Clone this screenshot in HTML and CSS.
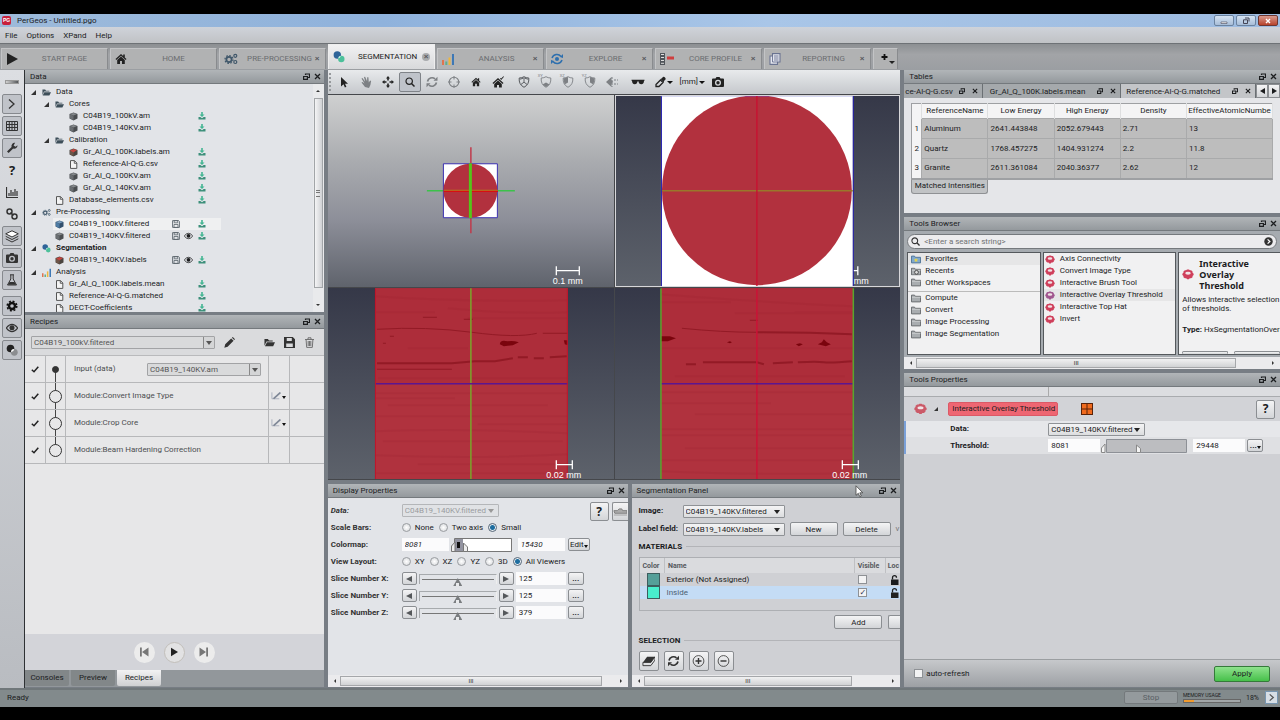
FILE: index.html
```html
<!DOCTYPE html>
<html lang="en">
<head>
<meta charset="utf-8">
<title>PerGeos - Untitled.pgo</title>
<link rel="stylesheet" href="styles.css">
</head>
<body>
<svg class="defs" aria-hidden="true">
  <symbol id="home" viewBox="0 0 12 12"><path d="M6 1 0.5 6l.8.9L6 2.7l4.7 4.2.8-.9L9.800 4.400V1.500H8.200V3zM6 3.600 2.200 7v4H5V8h2v3h2.800V7z"/></symbol>
  <symbol id="home2" viewBox="0 0 12 12"><path d="M6 2 0.500 7l.8.9L6 3.700l4.700 4.200.8-.9zM6 4.600 2.200 8v3.500H5V9h2v2.500h2.800V8zM8 2.500 9.200 4 12 .8 11.400.2 9.200 2.500 8.600 1.900z"/></symbol>
  <symbol id="gears" viewBox="0 0 14 12"><g fill="none" stroke="#40576a"><circle cx="5" cy="6.500" r="2.600" stroke-width="1.700"/><circle cx="5" cy="6.500" r="4" stroke-width="1.200" stroke-dasharray="1.600 1.500"/><circle cx="11.300" cy="2.800" r="1.500" stroke-width="1.200"/><circle cx="11.300" cy="9" r="1.500" stroke-width="1.200"/></g></symbol>
  <symbol id="blobs" viewBox="0 0 12 12"><circle cx="4.300" cy="4" r="3.700" fill="#2f6499"/><circle cx="8.300" cy="8" r="3.200" fill="#4cc09a"/><path d="M5.200 7.500a3.200 3.200 0 0 1 2.700-2.700 3.700 3.700 0 0 1-2.700 2.700z" fill="#e9f5f5"/></symbol>
  <symbol id="bars" viewBox="0 0 12 12"><path d="M0 7h2v5H0z" fill="#e0744e"/><path d="M3.300 8.500h2V12h-2z" fill="#5db08c"/><path d="M6.500 4.500h2V12h-2z" fill="#f0b73a"/><path d="M10 1h2v11h-2z" fill="#3e78b5"/></symbol>
  <symbol id="explore" viewBox="0 0 12 12"><g fill="none" stroke="#2d6fae" stroke-width="1.500"><path d="M1 5a5.200 5.200 0 0 1 9-1.500M11 7a5.200 5.200 0 0 1-9 1.500"/></g><circle cx="6" cy="6" r="2" fill="#2d6fae"/><path d="m9 4 3 1V1zM3 8 0 7v4z" fill="#2d6fae"/></symbol>
  <symbol id="core" viewBox="0 0 14 12"><path d="M0 0h5v12H0z" fill="#50555a"/><path d="M1 1.500h3M1 4.500h3M1 7.500h3M1 10.300h3" stroke="#ddd"/><path d="M7 3.500h7v3H7z" fill="#cf3f3f"/></symbol>
  <symbol id="report" viewBox="0 0 12 12"><path d="M3.500.6h7.500v8.400H8.500v2.400H1V3h2.500z" fill="#e4e6ee" stroke="#6a7391" stroke-width="1.100"/><path d="M5 3h4.500M5 5h4.500M5 7h4.500M3.500 3v6h5" stroke="#6a7391" stroke-width=".9" fill="none"/></symbol>
  <symbol id="play" viewBox="0 0 12 12"><path d="M1 0v12l11-6z"/></symbol>
  <symbol id="folder" viewBox="0 0 10 8"><path d="M.5 7V.8h3l1 1.200h3.700V3H2.200z" fill="#3d4e59"/><path d="M2.600 3.600H10L8.200 7.300H.8z" fill="#3d4e59"/></symbol>
  <symbol id="open" viewBox="0 0 12 9"><path d="M.5 8V.8h3.700l1.300 1.400h4V3.300H2.700z"/><path d="M3.200 4.200H12L10 8.500H1z"/></symbol>
  <symbol id="cube" viewBox="0 0 9 9"><path d="M4.500.5 8.500 2v4.600l-4 2-4-2V2z" fill="#4a4d50"/><path d="m1 2.300 3.500 1.500v4.300L1 6.400z" fill="#6a6e72"/><path d="M4.500 1 8 2.100 4.500 3.500 1 2.100z" fill="#85898c"/></symbol>
  <symbol id="cubeblue" viewBox="0 0 9 9"><path d="M4.500.5 8.500 2v4.600l-4 2-4-2V2z" fill="#33506c"/><path d="m1 2.300 3.500 1.500v4.300L1 6.400z" fill="#4d7ba3"/><path d="M4.500 1 8 2.100 4.500 3.500 1 2.100z" fill="#7ba0c0"/></symbol>
  <symbol id="cubered" viewBox="0 0 9 9"><path d="M4.500.5 8.500 2v4.600l-4 2-4-2V2z" fill="#4a4540"/><path d="m1 2.300 3.500 1.500v4.300L1 6.400z" fill="#6c5548"/><path d="M4.500 1 8 2.100 4.500 4.500 1 2.500z" fill="#c4453f"/></symbol>
  <symbol id="doc" viewBox="0 0 8 9"><path d="M1 .6h4L7.300 3v5.400H1z" fill="#f4f4f4" stroke="#555" stroke-width="1"/><path d="M4.800.6v2.700h2.500" fill="none" stroke="#555" stroke-width=".9"/></symbol>
  <symbol id="down" viewBox="0 0 8 8"><path d="M3.200 0h1.600v2.500h1.700L4 5 1.500 2.500h1.700z" fill="#43b592"/><path d="M.5 5h1.800L4 6.300 5.700 5h1.800v2.500h-7z" fill="#3c8f7a"/></symbol>
  <symbol id="disk" viewBox="0 0 8 8"><path d="M.6.600h6l.8.8v6H.6z" fill="none" stroke="#5a646c" stroke-width=".9"/><path d="M2.200.6h3.500v2.200H2.200zM2 4.500h4v3H2z" fill="none" stroke="#5a646c" stroke-width=".8"/></symbol>
  <symbol id="save" viewBox="0 0 10 10"><path d="M0 0h8l2 2v8H0zm2.500 1v2.700h4.600V1zM2 5.800V9h6V5.800z" fill-rule="evenodd"/></symbol>
  <symbol id="eye" viewBox="0 0 10 8"><path d="M.3 4Q2.500 1 5 1t4.700 3Q7.500 7 5 7T.3 4z" fill="none" stroke="currentColor" stroke-width=".9"/><circle cx="5" cy="3.800" r="2.100"/></symbol>
  <symbol id="float" viewBox="0 0 7 7"><path d="M2.500 2V1h4v3.500H5" fill="none" stroke="currentColor" stroke-width="1.200"/><path d="M.6 3.500h3.800v2.900H.6z" fill="none" stroke="currentColor" stroke-width="1.200"/></symbol>
  <symbol id="close" viewBox="0 0 7 7"><path d="m1 1 5 5M6 1 1 6" stroke="currentColor" stroke-width="1.300"/></symbol>
  <symbol id="pen" viewBox="0 0 10 10"><path d="m.3 9.700.8-3L6.500 1.300l2.200 2.200-5.400 5.400zM7.200.7 8 0l2 2-.7.8z"/></symbol>
  <symbol id="trash" viewBox="0 0 10 11"><path d="M.5 2.500h9M3.500 2.300V.8h3v1.500M1.600 2.800l.6 7.600h5.600l.6-7.600M3.700 4v5M5 4v5M6.300 4v5" fill="none" stroke="#666" stroke-width=".9"/></symbol>
  <symbol id="check" viewBox="0 0 8 7"><path d="m.8 3.700 2.200 2L7.300.8" fill="none" stroke="#222" stroke-width="1.500"/></symbol>
  <symbol id="pencil" viewBox="0 0 12 10"><path d="M1 1v7h8" fill="none" stroke="#98a1b0" stroke-width=".8"/><path d="m2 7.500 7.500-7 1.500 1.200L3.500 8.500z" fill="#7e8796"/></symbol>
  <symbol id="magnify" viewBox="0 0 10 10"><circle cx="4.200" cy="4.200" r="3.200" fill="none" stroke="currentColor" stroke-width="1.200"/><path d="m6.500 6.500 3 3" stroke="currentColor" stroke-width="1.500"/></symbol>
  <symbol id="camera" viewBox="0 0 12 11"><path d="M1 2h2.500L4.500.6h3L8.500 2H11q1 0 1 1v6.500q0 1-1 1H1q-1 0-1-1V3q0-1 1-1zm5 1.200a3 3 0 1 0 0 6 3 3 0 0 0 0-6zm0 1.300a1.700 1.700 0 1 1 0 3.400 1.700 1.700 0 0 1 0-3.400z" fill-rule="evenodd"/></symbol>
  <symbol id="shield" viewBox="0 0 12 12"><path d="M1.200 2Q4 2 6 .7 8 2 10.800 2 11.400 8.500 6 11.300.6 8.500 1.200 2z" fill="none" stroke="currentColor"/><path d="M6 3v3.200L2.800 8.500M6 6.200l3.200 2.300M2 3.200 6 2l4 1.200" fill="none" stroke="currentColor" stroke-width=".9"/></symbol>
  <symbol id="shieldbase" viewBox="0 0 12 12"><path d="M1.200 2Q4 2 6 .7 8 2 10.800 2 11.400 8.500 6 11.300.6 8.500 1.200 2z" fill="none" stroke="currentColor" stroke-width=".9"/></symbol>
  <symbol id="swirl" viewBox="0 0 12 12"><path d="M1.500 5.500a4.600 4.600 0 0 1 7.500-2.600M10.500 6.500A4.600 4.600 0 0 1 3 9.100" fill="none" stroke="currentColor" stroke-width="1.700"/><path d="M7.500 4.700h4V.8zM4.500 7.300h-4v3.900z"/></symbol>
  <symbol id="ring" viewBox="0 0 10 9"><path d="m1.200 2 1.200-1h1L4.200.4h1.600l.8.600h1L8.800 2v1l.9.800V5l-.9.700v1L7.600 7.600H6.400l-.6.800H4.200l-.6-.8H2.400L1.200 6.700v-1L.3 5V3.800L1.200 3z" fill="currentColor"/><ellipse cx="5" cy="3.500" rx="2.300" ry="1.200" fill="#f1e3e6"/></symbol>
  <symbol id="dir" viewBox="0 0 10 8"><path d="M.5.600h3l.8 1.200h5.200v5.600h-9z" fill="#a9adb0" stroke="#64686b" stroke-width=".9"/><path d="M1 2.800h8.500" stroke="#d5d8da" stroke-width=".7"/></symbol>
  <symbol id="lock" viewBox="0 0 9 10"><path d="M1 4.500h7.500V10H1z"/><path d="M2.500 4.500V2.700a2 2 0 0 1 4 0" fill="none" stroke="currentColor" stroke-width="1.300"/></symbol>
</svg>

<div class="app">
  <header class="titlebar">
    <span class="logo">PG</span>
    <h1>PerGeos - Untitled.pgo</h1>
    <div class="winbtns">
      <button aria-label="Minimize"><svg viewBox="0 0 10 8"><path d="M2 5h6v1.500H2z" fill="#fff" stroke="#445" stroke-width=".6"/></svg></button>
      <button aria-label="Restore"><svg viewBox="0 0 10 8"><path d="M4 1h4v3.500M2.500 2.800h4v3.700h-4z" fill="none" stroke="#445" stroke-width="1"/></svg></button>
      <button class="winclose" aria-label="Close window"><svg viewBox="0 0 10 8"><path d="m3 2 4 4M7 2 3 6" stroke="#fff" stroke-width="1.400"/></svg></button>
    </div>
  </header>
  <nav class="menubar"><button>File</button><button>Options</button><button>XPand</button><button>Help</button></nav>

  <nav class="tabs">
    <button class="tab"><svg class="i12"><use href="#play"/></svg><span>START PAGE</span></button>
    <button class="tab"><svg class="i12"><use href="#home"/></svg><span>HOME</span></button>
    <button class="tab"><svg class="i14"><use href="#gears"/></svg><span>PRE-PROCESSING</span><b>×</b></button>
    <button class="tab active"><svg class="i12"><use href="#blobs"/></svg><span>SEGMENTATION</span><b>×</b></button>
    <button class="tab"><svg class="i12"><use href="#bars"/></svg><span>ANALYSIS</span><b>×</b></button>
    <button class="tab"><svg class="i12"><use href="#explore"/></svg><span>EXPLORE</span><b>×</b></button>
    <button class="tab"><svg class="i14"><use href="#core"/></svg><span>CORE PROFILE</span><b>×</b></button>
    <button class="tab"><svg class="i12"><use href="#report"/></svg><span>REPORTING</span><b>×</b></button>
    <button class="tab plus" aria-label="Add tab"><svg viewBox="0 0 14 12"><path d="M3.500 0v6M.5 3h6" stroke="#111" stroke-width="1.800"/><path d="M8 7h6l-3 3z"/></svg></button>
  </nav>

  <div class="work">
    <aside class="rail">
      <span class="grip"></span>
      <button class="on" aria-label="Console"><svg viewBox="0 0 12 12"><path d="m3 1.500 5 4.500-5 4.500" fill="none" stroke="#333" stroke-width="1.300"/></svg></button>
      <button class="on" aria-label="Tables"><svg viewBox="0 0 12 12"><path d="M.5 1.500h11v9H.5zM.5 4.500h11M.5 7.500h11M3.300 1.500v9M6 1.500v9M8.700 1.500v9" fill="none" stroke="#333"/></svg></button>
      <button class="on" aria-label="Tools"><svg viewBox="0 0 12 12"><path d="M11.500 3.200 9.500 4.800 7.600 3.500l1.500-2.700A3.200 3.200 0 0 0 5.600 5L1 9.500 2.600 11l4.600-4.500a3.200 3.200 0 0 0 4.300-3.300z" fill="#333"/></svg></button>
      <button aria-label="Help"><span class="q">?</span></button>
      <button aria-label="Histogram"><svg viewBox="0 0 12 12"><path d="M.5 1v10.500H12M3 10V7M5 10V4M7 10V6M9 10V3M11 10V5" fill="none" stroke="#333" stroke-width="1.200"/></svg></button>
      <button aria-label="Link"><svg viewBox="0 0 12 12"><circle cx="3.500" cy="3.500" r="2.500" fill="none" stroke="#333" stroke-width="1.500"/><circle cx="8.500" cy="8.500" r="2.500" fill="none" stroke="#333" stroke-width="1.500"/><path d="m4.500 4.500 3 3" stroke="#333" stroke-width="1.500"/></svg></button>
      <button class="on" aria-label="Layers"><svg class="big" viewBox="0 0 14 13"><path d="m7 .8 6.300 3L7 7 .7 3.800z" fill="#fff" stroke="#333"/><path d="M.7 6.300 7 9.500l6.300-3.200M.7 8.800 7 12l6.300-3.200" fill="none" stroke="#333"/></svg></button>
      <button class="on" aria-label="Snapshot"><svg><use href="#camera"/></svg></button>
      <button class="on" aria-label="Lab"><svg viewBox="0 0 12 12"><path d="M4 .8h4M4.800 1v4L1.500 11h9L7.200 5V1" fill="none" stroke="#333"/><path d="M3.500 8h5l1.500 2.800H2z"/></svg></button>
      <button class="on apart" aria-label="Settings"><svg viewBox="0 0 12 12"><circle cx="6" cy="6" r="3" fill="none" stroke="#111" stroke-width="2.400"/><circle cx="6" cy="6" r="4.800" fill="none" stroke="#111" stroke-width="1.500" stroke-dasharray="2 1.770"/></svg></button>
      <button class="on" aria-label="Visibility"><svg><use href="#eye"/></svg></button>
      <button class="on" aria-label="Blend"><svg viewBox="0 0 12 12"><circle cx="4.500" cy="4.500" r="3.800" fill="#222"/><circle cx="8.300" cy="8.300" r="3.400" fill="#8b8d90"/><path d="M5 8.200A3.400 3.400 0 0 1 8.300 5 3.800 3.800 0 0 1 5 8.200z" fill="#fff"/></svg></button>
    </aside>

    <main class="columns">
      <div class="col left">
        <section class="panel datapanel">
          <header class="phead"><h2>Data</h2><button aria-label="Float"><svg><use href="#float"/></svg></button><button aria-label="Close"><svg><use href="#close"/></svg></button></header>
          <div class="treebox">
            <ul class="tree">
              <li class="l1"><span class="n"><i></i><svg><use href="#folder"/></svg>Data</span></li>
              <li class="l2"><span class="n"><i></i><svg><use href="#folder"/></svg>Cores</span></li>
              <li class="l3"><span class="n"><svg><use href="#cube"/></svg>C04B19_100kV.am</span><svg class="c3"><use href="#down"/></svg></li>
              <li class="l3"><span class="n"><svg><use href="#cube"/></svg>C04B19_140KV.am</span><svg class="c3"><use href="#down"/></svg></li>
              <li class="l2"><span class="n"><i></i><svg><use href="#folder"/></svg>Calibration</span></li>
              <li class="l3"><span class="n"><svg><use href="#cubered"/></svg>Gr_Al_Q_100K.labels.am</span><svg class="c3"><use href="#down"/></svg></li>
              <li class="l3"><span class="n"><svg><use href="#doc"/></svg>Reference-Al-Q-G.csv</span><svg class="c3"><use href="#down"/></svg></li>
              <li class="l3"><span class="n"><svg><use href="#cube"/></svg>Gr_Al_Q_100KV.am</span><svg class="c3"><use href="#down"/></svg></li>
              <li class="l3"><span class="n"><svg><use href="#cube"/></svg>Gr_Al_Q_140KV.am</span><svg class="c3"><use href="#down"/></svg></li>
              <li class="l2x"><span class="n"><svg><use href="#doc"/></svg>Database_elements.csv</span><svg class="c3"><use href="#down"/></svg></li>
              <li class="l1"><span class="n"><i></i><svg><use href="#gears"/></svg>Pre-Processing</span></li>
              <li class="l2x sel"><span class="n"><svg><use href="#cubeblue"/></svg>C04B19_100kV.filtered</span><svg class="c1"><use href="#disk"/></svg><svg class="c3"><use href="#down"/></svg></li>
              <li class="l2x"><span class="n"><svg><use href="#cube"/></svg>C04B19_140KV.filtered</span><svg class="c1"><use href="#disk"/></svg><svg class="c2"><use href="#eye"/></svg><svg class="c3"><use href="#down"/></svg></li>
              <li class="l1"><span class="n"><i></i><svg><use href="#blobs"/></svg><b>Segmentation</b></span></li>
              <li class="l2x"><span class="n"><svg><use href="#cubered"/></svg>C04B19_140KV.labels</span><svg class="c1"><use href="#disk"/></svg><svg class="c2"><use href="#eye"/></svg><svg class="c3"><use href="#down"/></svg></li>
              <li class="l1"><span class="n"><i></i><svg><use href="#bars"/></svg>Analysis</span></li>
              <li class="l2x"><span class="n"><svg><use href="#doc"/></svg>Gr_Al_Q_100K.labels.mean</span><svg class="c3"><use href="#down"/></svg></li>
              <li class="l2x"><span class="n"><svg><use href="#doc"/></svg>Reference-Al-Q-G.matched</span><svg class="c3"><use href="#down"/></svg></li>
              <li class="l2x"><span class="n"><svg><use href="#doc"/></svg>DECT-Coefficients</span><svg class="c3"><use href="#down"/></svg></li>
            </ul>
            <div class="vscroll"><i class="up"></i><span></span><i class="dn"></i></div>
          </div>
        </section>

        <section class="panel recipes">
          <header class="phead"><h2>Recipes</h2><button aria-label="Float"><svg><use href="#float"/></svg></button><button aria-label="Close"><svg><use href="#close"/></svg></button></header>
          <div class="rbar">
            <span class="sel-wrap split wide"><select aria-label="Recipe"><option>C04B19_100kV.filtered</option></select></span>
            <button aria-label="Edit"><svg><use href="#pen"/></svg></button>
            <span class="grow"></span>
            <button aria-label="Open"><svg><use href="#open"/></svg></button>
            <button aria-label="Save"><svg><use href="#save"/></svg></button>
            <button aria-label="Delete recipe"><svg><use href="#trash"/></svg></button>
          </div>
          <div class="steps">
            <div class="step first"><svg><use href="#check"/></svg><span class="node dot"></span><label for="inp">Input (data)</label><span class="sel-wrap split"><select id="inp"><option>C04B19_140KV.am</option></select></span><span class="cell"></span><span class="cell"></span></div>
            <div class="step"><svg><use href="#check"/></svg><span class="node"></span><p>Module:Convert Image Type</p><span class="cell"><svg><use href="#pencil"/></svg><i></i></span><span class="cell"></span></div>
            <div class="step"><svg><use href="#check"/></svg><span class="node"></span><p>Module:Crop Core</p><span class="cell"><svg><use href="#pencil"/></svg><i></i></span><span class="cell"></span></div>
            <div class="step last"><svg><use href="#check"/></svg><span class="node"></span><p>Module:Beam Hardening Correction</p><span class="cell"></span><span class="cell"></span></div>
          </div>
          <div class="transport">
            <button aria-label="First"><svg viewBox="0 0 10 10"><path d="M1 .5h1.800v9H1zM9.500.5v9L3 5z" fill="#777"/></svg></button>
            <button class="mid" aria-label="Play"><svg viewBox="0 0 10 10"><path d="M2 .8v8.400L9 5z"/></svg></button>
            <button aria-label="Last"><svg viewBox="0 0 10 10"><path d="M7.200.5H9v9H7.200zM.5.500v9L7 5z" fill="#777"/></svg></button>
          </div>
          <nav class="btabs"><button>Consoles</button><button>Preview</button><button class="active">Recipes</button></nav>
        </section>
      </div>

      <div class="col center">
        <div class="toolbar">
          <span class="dots"></span>
          <button aria-label="Select"><svg viewBox="0 0 12 12"><path d="M3 1v9.500L5.500 8.200l1.400 3.200 1.500-.7L7 7.700h3z"/></svg></button>
          <button class="dim" aria-label="Pan"><svg viewBox="0 0 12 12"><path d="M5 11 1.500 6.500l1-.6L4.500 7.500 1.500 2.600l1-.6 2.700 3.800L4 1l1.100-.3 2 4.600L7.200 1.200l1.200.1.400 5.200 1.300-2 1 .5L10.400 9 9 12z"/></svg></button>
          <button aria-label="Move"><svg viewBox="0 0 12 12"><path d="m6 0 2 2.500H6.800v2H5.200v-2H4zM6 12l2-2.500H6.800v-2H5.200v2H4zM0 6l2.500-2v1.200h2v1.600h-2V8zM12 6 9.500 4v1.200h-2v1.600h2V8z"/></svg></button>
          <button class="on" aria-label="Zoom"><svg viewBox="0 0 10 10"><use href="#magnify"/></svg></button>
          <button class="dim" aria-label="Rotate"><svg><use href="#swirl"/></svg></button>
          <button class="dim" aria-label="Target"><svg viewBox="0 0 12 12"><circle cx="6" cy="6" r="4.800" fill="none" stroke="currentColor" stroke-width="1.100"/><path d="M6 0v3.500M6 8.500V12M0 6h3.500M8.500 6H12" stroke="currentColor"/></svg></button>
          <button aria-label="Home"><svg class="sm"><use href="#home"/></svg></button>
          <button aria-label="Set home"><svg><use href="#home2"/></svg></button>
          <button class="gap4 mid" aria-label="Isometric"><svg><use href="#shield"/></svg></button>
          <button class="dim" aria-label="XY"><svg viewBox="0 0 12 12"><use href="#shieldbase"/><path d="M2.500 8.500 6 6.500l3.500 2L6 11z"/></svg><sup>XY</sup></button>
          <button class="dim" aria-label="XZ"><svg viewBox="0 0 12 12"><use href="#shieldbase"/><path d="M1.500 2.500 6 1v5.500L2.500 8.500z"/></svg><sup>XZ</sup></button>
          <button class="dim" aria-label="YZ"><svg viewBox="0 0 12 12"><use href="#shieldbase"/><path d="M10.500 2.500 6 1v5.500l3.500 2z"/></svg><sup>YZ</sup></button>
          <button class="dim" aria-label="Perspective"><svg viewBox="0 0 12 12"><path d="M0 6 5.500 1v3l1.500 2-1.500 2v3z"/><path d="M6 1v10M8 4h4M8 8h4" stroke="currentColor" fill="none" stroke-dasharray="2 1"/></svg></button>
          <button class="gap4" aria-label="Stereo"><svg class="wide" viewBox="0 0 14 8"><path d="M.5 1.800h13v1H13q0 3.400-2.700 3.400T7.700 3.500H6.300Q6.300 6.200 3.700 6.200T1 2.800H.5z"/></svg></button>
          <button class="w30" aria-label="Measure"><svg viewBox="0 0 12 12"><path d="M2 8.500 6.500 4 9 6.500 5 10.500H2z" fill="none" stroke="#222" stroke-width="1.300"/><path d="m6.500 3 1-.5 1.500-1.500q1-.5 2 .5t.5 2L10 5v1.500z"/></svg><i></i></button>
          <button class="w30">[mm]<i></i></button>
          <button aria-label="Snapshot"><svg><use href="#camera"/></svg></button>
        </div>

        <div class="viewers">
          <svg class="view light" viewBox="0 0 286 191">
            <path d="M143 52v86" stroke="#c03a4c" stroke-width="1.500"/><path d="M99 95.500h88" stroke="#3cc24a" stroke-width="1.500"/>
            <path d="M115.500 68.500h54v54h-54z" fill="#fff" stroke="#3a2fb0"/>
            <circle cx="142.500" cy="95.500" r="27" fill="#b2313e"/>
            <path d="M116 96h54" stroke="#d80f10" stroke-width="1.500"/><path d="M116 95h54" stroke="#b5791c"/><path d="M142.500 68v55" stroke="#55c41a" stroke-width="3"/>
            <path d="M228.500 171v9M251.500 171v9M228 175.500h23" stroke="#fff" stroke-width="1.300"/><text x="240" y="189">0.1 mm</text>
          </svg>
          <svg class="view picked" viewBox="0 0 286 191">
            <path d="M46 0h192v191H46z" fill="#fff"/>
            <circle cx="142" cy="95" r="95" fill="#b2313e"/>
            <path d="M46.500 0v191M238.500 0v191" stroke="#241fb0"/><path d="M46 .5h192" stroke="#7f86d8"/><path d="M130 .5h24" stroke="#8a1590"/>
            <path d="M47 95.500h191" stroke="#99772b" stroke-width="1.300"/><path d="M142 0v191" stroke="#c90f30" stroke-width="1.300"/>
            <path d="M239 175.500h4M243 171v9" stroke="#fff" stroke-width="1.300"/><text class="start" x="239" y="189">mm</text>
          </svg>
          <svg class="view" viewBox="0 0 286 191">
            <path d="M47 0h193v191H47z" fill="#b0323e"/><path d="M47 0h193v95H47z" fill="#ad2d3a"/>
            <g class="streaks"><path d="M47 8q90 6 193 4M120 20q60 6 120 4M47 24h60M80 60h60M50 90h190M47 105h193M60 117h160M47 128h193M47 143q90-3 193 2M55 153h180M47 167q100 4 193-1M90 176h150M47 185h193M140 30h100M47 110h80M150 136h90"/></g>
            <g class="cracks"><path d="M49 41q50-3 95 3t65 1M215 45h25M49 81h75M95 29h14M136 31h9"/><path class="deep" d="M49 75h75l23-2h20l18-3M190 69h10M206 70h10M222 69l17-1"/><path d="M55 55h3M62 48h4"/></g>
            <path class="void" d="M172 56q0-5 8-3 5-1 11 1l-6 3-9 1zM236 52h4v5l-3-1z"/>
            <path d="M143 0v191" stroke="#7f982c" stroke-width="1.700"/><path d="M47 95.500h193" stroke="#5b1590" stroke-width="1.300"/><path d="M47.500 0v191M239.500 0v191" stroke="#c0152b"/>
            <path d="M228.500 172v9M244.500 172v9M228 176.500h16" stroke="#fff" stroke-width="1.300"/><text x="236" y="190">0.02 mm</text>
          </svg>
          <svg class="view" viewBox="0 0 286 191">
            <path d="M46 0h192v191H46z" fill="#b0323e"/><path d="M46 0h192v95H46z" fill="#ad2d3a"/>
            <g class="streaks"><path d="M46 6q70 6 192 12M46 14h70M120 25h118M180 24h58M46 60h192M60 88h170M46 104h192M80 126h158M46 141h192M46 147h192M70 160h168M46 172h192M46 183q90 4 192 2M46 115h110"/></g>
            <g class="cracks"><path d="M67 40q40 4 75 4M135 32h8"/><path class="deep" d="M142 44q53 0 95 2M71 76h10M88 74h54l7 2M158 75l20-1M183 74q20-1 26 0t28-1"/></g>
            <path class="void" d="M46 48h9l6 2-8 3h-7zM112 54l3-1 2 1-2 1zM181 56l4-1 3 1-4 2zM203 56l4-2 2-3 3 3 4 2-5 2z"/>
            <path d="M142 0v191" stroke="#cb1236" stroke-width="1.500"/><path d="M46 95.500h192" stroke="#5b1590" stroke-width="1.300"/><path d="M46 0v191M238.500 0v191" stroke="#5aa52c" stroke-width="1.500"/>
            <path d="M227.500 172v9M243.500 172v9M227 176.500h16" stroke="#fff" stroke-width="1.300"/><text x="235" y="190">0.02 mm</text>
          </svg>
        </div>

        <div class="bottom">
          <section class="panel display">
            <header class="phead"><h2>Display Properties</h2><button aria-label="Float"><svg><use href="#float"/></svg></button><button aria-label="Close"><svg><use href="#close"/></svg></button></header>
            <form class="props">
              <div class="row"><label class="lab" for="dd"><em>Data:</em></label><span class="sel-wrap off"><select id="dd" disabled><option>C04B19_140KV.filtered</option></select></span></div>
              <div class="row"><span class="lab">Scale Bars:</span><label><input type="radio" name="sb">None</label><label><input type="radio" name="sb">Two axis</label><label><input type="radio" name="sb" checked>Small</label></div>
              <div class="row"><label class="lab" for="cm">Colormap:</label><input id="cm" class="num ital" value="8081"><span class="ramp"><svg viewBox="0 0 61 14"><path d="M3.500.5h57v13h-57z" fill="#fff" stroke="#777"/><path d="M4 1h8v12H4z" fill="#9293a0"/><path d="M6 4h3v6H6z" fill="#111"/><path d="M.5 13.500V8L4 4v9.500zM12.500 13.500V5l4 4v4.500z" fill="#eee" stroke="#777"/></svg></span><input class="num ital" aria-label="Colormap maximum" value="15430"><button type="button" class="btn edit">Edit<i></i></button></div>
              <div class="row"><span class="lab">View Layout:</span><label><input type="radio" name="vl">XY</label><label><input type="radio" name="vl">XZ</label><label><input type="radio" name="vl">YZ</label><label><input type="radio" name="vl">3D</label><label><input type="radio" name="vl" checked>All Viewers</label></div>
              <div class="row"><label class="lab" for="sx">Slice Number X:</label><button type="button" class="btn arr" aria-label="Previous"><i class="lt"></i></button><input class="slide" type="range" aria-label="Slice X"><button type="button" class="btn arr" aria-label="Next"><i class="rt"></i></button><input id="sx" class="num val" value="125"><button type="button" class="btn more">...</button></div>
              <div class="row"><label class="lab" for="sy">Slice Number Y:</label><button type="button" class="btn arr" aria-label="Previous"><i class="lt"></i></button><input class="slide" type="range" aria-label="Slice Y"><button type="button" class="btn arr" aria-label="Next"><i class="rt"></i></button><input id="sy" class="num val" value="125"><button type="button" class="btn more">...</button></div>
              <div class="row"><label class="lab" for="sz">Slice Number Z:</label><button type="button" class="btn arr" aria-label="Previous"><i class="lt"></i></button><input class="slide" type="range" aria-label="Slice Z"><button type="button" class="btn arr" aria-label="Next"><i class="rt"></i></button><input id="sz" class="num val" value="379"><button type="button" class="btn more">...</button></div>
              <div class="corner"><button type="button" class="btn sq">?</button><button type="button" class="btn sq cut" aria-label="Port"><svg viewBox="0 0 16 12"><path d="M1 5h4l2-2h3l1 2h5v3H2z" fill="#aaa" stroke="#777"/><path d="M1 10h15" stroke="#999"/></svg></button></div>
            </form>
            <div class="hscroll"><i class="lt"></i><span class="thumb t1">III</span><i class="rt"></i></div>
          </section>

          <section class="panel seg">
            <header class="phead"><h2>Segmentation Panel</h2><button aria-label="Float"><svg><use href="#float"/></svg></button><button aria-label="Close"><svg><use href="#close"/></svg></button>
              <svg class="cursor" viewBox="0 0 9 13"><path d="M1 .8v9.500l2.300-2 1.500 3.400 1.500-.7-1.500-3.200h3z" fill="#fff" stroke="#444" stroke-width=".8"/></svg></header>
            <div class="segbody">
              <div class="srow"><label for="im">Image:</label><span class="sel-wrap"><select id="im"><option>C04B19_140KV.filtered</option></select></span></div>
              <div class="srow"><label for="lf">Label field:</label><span class="sel-wrap"><select id="lf"><option>C04B19_140KV.labels</option></select></span><button class="btn cmd">New</button><button class="btn cmd">Delete</button><span class="vmark">v</span></div>
              <h3><span>MATERIALS</span></h3>
              <div class="mats"><table>
                <thead><tr><th class="mc">Color</th><th>Name</th><th class="mv">Visible</th><th class="ml">Loc</th></tr></thead>
                <tbody>
                  <tr><td><span class="sw ext"></span></td><td>Exterior (Not Assigned)</td><td class="mid"><input type="checkbox" aria-label="Exterior visible"></td><td><svg><use href="#lock"/></svg></td></tr>
                  <tr class="chosen"><td><span class="sw ins"></span></td><td>Inside</td><td class="mid"><input type="checkbox" aria-label="Inside visible" checked></td><td><svg><use href="#lock"/></svg></td></tr>
                </tbody></table></div>
              <div class="addrow"><button class="btn cmd">Add</button><button class="btn cmd stub" aria-label="Remove"></button></div>
              <h3><span>SELECTION</span></h3>
              <div class="tools">
                <button class="btn" aria-label="Erase"><svg viewBox="0 0 14 12"><path d="M5.500 1.500H14l-4.500 6H1z"/><path d="M1 7.500h8.500l4.500-6V5L9.500 11H1z" fill="none" stroke="#333"/></svg></button>
                <button class="btn" aria-label="Refresh"><svg><use href="#swirl"/></svg></button>
                <button class="btn" aria-label="Add to selection"><svg viewBox="0 0 12 12"><circle cx="6" cy="6" r="5.400" fill="none" stroke="#444" stroke-width=".9"/><path d="M6 3v6M3 6h6" stroke="#333" stroke-width="1.400"/></svg></button>
                <button class="btn" aria-label="Subtract from selection"><svg viewBox="0 0 12 12"><circle cx="6" cy="6" r="5.400" fill="none" stroke="#444" stroke-width=".9"/><path d="M3 6h6" stroke="#333" stroke-width="1.400"/></svg></button>
              </div>
            </div>
            <div class="hscroll"><i class="lt"></i><span class="thumb t2">III</span><i class="rt"></i></div>
          </section>
        </div>
      </div>

      <div class="col right">
        <section class="panel tables">
          <header class="phead"><h2>Tables</h2><button aria-label="Float"><svg><use href="#float"/></svg></button><button aria-label="Close"><svg><use href="#close"/></svg></button></header>
          <nav class="ttabs">
            <span class="tt t-a"><button>ce-Al-Q-G.csv</button><svg><use href="#float"/></svg><svg><use href="#close"/></svg></span>
            <span class="tt t-b"><button>Gr_Al_Q_100K.labels.mean</button><svg><use href="#float"/></svg><svg><use href="#close"/></svg></span>
            <span class="tt t-c"><button>Reference-Al-Q-G.matched</button><svg><use href="#float"/></svg><svg><use href="#close"/></svg></span>
            <button class="btn nav" aria-label="Scroll left"><i class="lt"></i></button><button class="btn nav" aria-label="Scroll right"><i class="rt"></i></button>
          </nav>
          <div class="tbody">
            <table>
              <thead><tr><th class="rn"></th><th>ReferenceName</th><th>Low Energy</th><th>High Energy</th><th>Density</th><th class="ean">EffectiveAtomicNumbe</th></tr></thead>
              <tbody>
                <tr><th>1</th><td>Aluminum</td><td>2641.443848</td><td>2052.679443</td><td>2.71</td><td>13</td></tr>
                <tr><th>2</th><td>Quartz</td><td>1768.457275</td><td>1404.931274</td><td>2.2</td><td>11.8</td></tr>
                <tr><th>3</th><td>Granite</td><td>2611.361084</td><td>2040.36377</td><td>2.62</td><td>12</td></tr>
              </tbody>
            </table>
            <button class="sheet">Matched Intensities</button>
          </div>
        </section>

        <section class="panel browser">
          <header class="phead"><h2>Tools Browser</h2><button aria-label="Float"><svg><use href="#float"/></svg></button><button aria-label="Close"><svg><use href="#close"/></svg></button></header>
          <div class="search"><svg><use href="#magnify"/></svg><input type="text" aria-label="Search" placeholder="&lt;Enter a search string&gt;"><button aria-label="Go"><svg viewBox="0 0 10 10"><circle cx="5" cy="5" r="4.700"/><path d="m4 2.600 2.500 2.400L4 7.400" fill="none" stroke="#fff" stroke-width="1.400"/></svg></button></div>
          <div class="lists">
            <ul class="list">
              <li class="hot"><svg viewBox="0 0 10 8"><path d="M.5.600h3l.8 1.200h5.200v5.600h-9z" fill="#7fa9cf" stroke="#4d7396" stroke-width=".9"/><path d="m5 2.500.7 1.300 1.500.2-1.100 1 .3 1.500L5 5.800l-1.400.7.300-1.500-1.100-1 1.500-.2z" fill="#e6d34a"/></svg>Favorites</li><li><svg viewBox="0 0 10 8"><use href="#dir"/><circle cx="5.500" cy="4.800" r="1.900" fill="#ddd" stroke="#333" stroke-width=".8"/></svg>Recents</li><li class="rule"><svg><use href="#dir"/></svg>Other Workspaces</li>
              <li><svg><use href="#dir"/></svg>Compute</li><li><svg><use href="#dir"/></svg>Convert</li><li><svg><use href="#dir"/></svg>Image Processing</li><li><svg><use href="#dir"/></svg>Image Segmentation</li>
            </ul>
            <ul class="list rings">
              <li><svg><use href="#ring"/></svg>Axis Connectivity</li><li><svg><use href="#ring"/></svg>Convert Image Type</li><li><svg><use href="#ring"/></svg>Interactive Brush Tool</li><li class="hot"><svg class="pu"><use href="#ring"/></svg>Interactive Overlay Threshold</li><li><svg><use href="#ring"/></svg>Interactive Top Hat</li><li><svg><use href="#ring"/></svg>Invert</li>
            </ul>
            <article class="info">
              <div class="ihead"><svg><use href="#ring"/></svg><h3>Interactive Overlay Threshold</h3></div>
              <p>Allows interactive selection of thresholds.</p>
              <p class="type"><b>Type:</b> HxSegmentationOverla</p>
              <div class="ibtns"><button class="btn" aria-label="Create"></button><button class="btn" aria-label="Help"></button></div>
            </article>
          </div>
          <div class="hscroll"><i class="lt"></i><span class="thumb t3">III</span><i class="rt"></i></div>
        </section>

        <section class="panel tprops">
          <header class="phead"><h2>Tools Properties</h2><button aria-label="Float"><svg><use href="#float"/></svg></button><button aria-label="Close"><svg><use href="#close"/></svg></button></header>
          <div class="sub"></div>
          <div class="modrow"><svg class="ringbig"><use href="#ring"/></svg><i class="exp"></i><button class="mod">Interactive Overlay Threshold</button><svg class="grid4" viewBox="0 0 12 12"><path d="M0 0h12v12H0z" fill="#5a2208"/><path d="M1 1h4.500v4.500H1zM6.500 1H11v4.500H6.500zM1 6.500h4.500V11H1zM6.500 6.500H11V11H6.500z" fill="#f06a1d"/></svg><button class="btn sq">?</button></div>
          <div class="prow"><label for="td">Data:</label><span class="sel-wrap"><select id="td"><option>C04B19_140KV.filtered</option></select></span></div>
          <div class="prow alt"><label for="th">Threshold:</label><input id="th" class="num" value="8081"><svg class="range" viewBox="0 0 86 14"><path d="M5.500.5h80v13h-80z" fill="#bcbdc0" stroke="#8d9096"/><path d="M.5 13.500V9L4 5v8.500zM35.500 13.500V6l4 3.500v4z" fill="#f4f4f4" stroke="#888"/></svg><input class="num r" aria-label="Threshold maximum" value="29448"><button class="btn more">...<i></i></button></div>
          <div class="blank"></div>
          <footer class="apply"><label><input type="checkbox">auto-refresh</label><button class="go">Apply</button></footer>
        </section>
      </div>
    </main>
  </div>

  <footer class="status"><span>Ready</span><button class="stop" disabled>Stop</button><div class="mem"><span>MEMORY USAGE</span><div class="meter"><i></i></div></div><span class="pct">18%</span><button class="chev" aria-label="More"><svg viewBox="0 0 10 10"><path d="m3 1.500 4 3.500-4 3.500" fill="none" stroke="#555" stroke-width="1.400"/></svg></button></footer>
</div>
</body>
</html>
```
FILE: styles.css
```css
* { box-sizing: border-box; }
html, body { margin: 0; height: 100%; background: #000; }
body { font: 8px/12px Roboto, "Open Sans", sans-serif; color: #1b1c1e; }
button, input, select { font: inherit; color: inherit; margin: 0; padding: 0; }
button { background: none; border: 0; }
h1, h2, h3, p, ul { margin: 0; padding: 0; font-size: inherit; font-weight: 400; list-style: none; }
svg { display: block; flex: none; fill: currentColor; }
i { font-style: normal; }
.defs { position: absolute; width: 0; height: 0; }
.grow { flex: 1; }

.app { display: flex; flex-direction: column; height: 100vh; padding: 14px 0 13px; background: #000; }

.titlebar { display: flex; align-items: center; flex: none; height: 13px; padding: 0 2px; gap: 6px; background: linear-gradient(90deg, #9dbada, #8fb2dc 30%, #a9c6e8 60%, #9dbbe0); }
.titlebar h1 { flex: 1; }
.logo { width: 9px; height: 9px; border-radius: 2px; background: #c8203c; color: #fff; font: bold 5px/9px "Liberation Sans", sans-serif; text-align: center; }
.winbtns { display: flex; gap: 2px; }
.winbtns button { width: 20px; height: 11px; display: grid; place-items: center; border: 1px solid #6b83a0; border-radius: 2px; background: linear-gradient(#d5e3f2, #a7bdd8); }
.winbtns svg { width: 10px; height: 8px; }
.winbtns .winclose { background: linear-gradient(#d99a8e, #b8432c); border-color: #6e3730; }
.menubar { display: flex; gap: 9px; flex: none; height: 17px; padding: 1px 5px 0; border-bottom: 1px solid #6e7276; background: linear-gradient(#cfd3da, #c0c2c5); line-height: 16px; }

.tabs { display: flex; align-items: flex-end; gap: 2px; flex: none; height: 26px; padding: 0 1px 1px; background: linear-gradient(#8c8f92, #a2a4a7 40%, #9b9ea2); }
.tab { display: flex; align-items: center; flex: 0 1 107px; min-width: 0; height: 21px; padding: 0 4px; border: 1px solid #c3c4c6; border-bottom: 0; border-right-color: #898b8e; background: #b1b2b3; color: #6b6d70; }
.tab span { flex: 1; text-align: center; padding-left: 8px; }
.tab svg { color: #222; }
.tab b { width: 8px; height: 8px; font: bold 8px/7px "Liberation Sans", sans-serif; color: #55585b; }
.tab.active { height: 25px; background: linear-gradient(#f1f1f2, #d8d9db); color: #222; border-color: #eee; }
.tab.active b { border-radius: 4px; background: #a9abad; }
.tab.plus { flex-basis: 25px; padding: 2px 0 0 7px; }
.plus svg { width: 14px; height: 12px; }
.i12 { width: 12px; height: 12px; }
.i14 { width: 14px; height: 12px; }

.work { flex: 1; display: flex; min-height: 0; }
.rail { flex: none; width: 25px; display: flex; flex-direction: column; align-items: center; gap: 2px; padding: 2px 0; background: linear-gradient(#dcdee2, #b9bcc1); border-right: 1px solid #2e3134; }
.rail .grip { width: 14px; height: 4px; margin: 8px 0; background: linear-gradient(90deg, #d0d0d0, #55585b); border: 1px solid #999; }
.rail button { width: 20px; height: 20px; display: grid; place-items: center; border: 1px solid transparent; border-radius: 2px; }
.rail .on { border-color: #86898e; background: #c0c3c9; }
.rail svg { width: 12px; height: 12px; color: #333; }
.rail svg.big { width: 14px; height: 13px; }
.rail .apart { margin-top: 4px; }
.q { font: bold 13px/16px "Open Sans", sans-serif; }

.columns { flex: 1; min-width: 0; display: grid; grid-template-columns: minmax(0, 299fr) minmax(0, 573fr) minmax(0, 376fr); gap: 4px; padding-bottom: 1px; background: #777d84; }
.col { display: flex; flex-direction: column; min-height: 0; min-width: 0; }
.panel { display: flex; flex-direction: column; min-height: 0; min-width: 0; }
.phead { position: relative; flex: none; display: flex; align-items: center; gap: 4px; height: 14px; padding: 0 3px 0 5px; background: linear-gradient(#b1b5b8, #94999d); border-bottom: 1px solid #74797d; }
.phead h2 { flex: 1; line-height: 13px; }
.phead svg { width: 7px; height: 7px; color: #1d1f21; }

.left { gap: 3px; }
.datapanel { flex: 0 1 242px; }
.treebox { flex: 1; min-height: 0; display: flex; background: #e2e4e8; overflow: hidden; }
.tree { flex: 1; min-width: 0; padding-top: 2px; }
.tree li { display: grid; grid-template-columns: minmax(0, 144px) 13px 13px 14px; height: 12px; align-items: center; justify-items: center; }
.tree .n { justify-self: start; display: flex; align-items: center; gap: 5px; line-height: 12px; white-space: nowrap; }
.tree .n svg { width: 9px; height: 9px; }
.tree .c1, .tree .c2, .tree .c3 { width: 8px; height: 8px; grid-row: 1; }
.tree .c2 { width: 9px; }
.c1 { grid-column: 2; } .c2 { grid-column: 3; } .c3 { grid-column: 4; }
.tree .n i { width: 0; height: 0; border-left: 5px solid transparent; border-bottom: 5px solid #333; margin-right: 1px; }
.l1 .n { padding-left: 6px; } .l2 .n { padding-left: 19px; } .l3 .n { padding-left: 44px; } .l2x .n { padding-left: 30px; }
.tree .sel { width: 196px; max-width: 100%; background: linear-gradient(90deg, transparent 28px, #eff0f1 28px); }
.vscroll { flex: none; width: 11px; display: flex; flex-direction: column; align-items: center; background: #e9eaec; padding: 4px 0; gap: 6px; }
.vscroll span { flex: 0 1 190px; width: 9px; background: linear-gradient(90deg, #f4f4f5, #cfd1d4); border: 1px solid #a2a5a8; display: flex; }
.vscroll span::after { content: ""; margin: auto; width: 4px; height: 5px; border-top: 1px solid #777; border-bottom: 1px solid #777; background: linear-gradient(transparent 1px, #777 1px, #777 2px, transparent 2px); }
.vscroll i { border: 2px solid transparent; }
.vscroll .up { border-bottom-color: #333; }
.vscroll .dn { border-top-color: #333; margin-top: auto; }

.recipes { flex: 1; background: #e7e7e8; }
.rbar { display: flex; align-items: center; gap: 9px; height: 27px; padding: 0 9px 0 6px; background: #dadbdd; border-bottom: 1px solid #b9babc; color: #333; }
.rbar svg { width: 11px; height: 11px; }
.rbar .wide { flex: 0 1 184px; }
.sel-wrap { position: relative; display: flex; min-width: 0; height: 13px; border: 1px solid #8f9296; border-radius: 1px; background: linear-gradient(#f4f4f5, #dcdddf); }
.sel-wrap select { appearance: none; width: 100%; min-width: 0; border: 0; background: none; padding: 0 10px 0 2px; line-height: 11px; opacity: 1; }
.sel-wrap::after { content: ""; position: absolute; right: 4px; top: 4px; border: 3px solid transparent; border-top: 4px solid #222; border-bottom: 0; pointer-events: none; }
.split { background: linear-gradient(90deg, #d9dadb calc(100% - 11px), #888 calc(100% - 11px), #888 calc(100% - 10px), #d4d5d6 calc(100% - 10px)); border-color: #a2a3a5; color: #555; }
.split::after { right: 2px; border-top-color: #555; }
.off { color: #9a9ca0; border-color: #b4b6b9; background: #e0e2e5; }
.off::after { border-top-color: #999; }
.step { display: grid; grid-template-columns: 20px 21px minmax(0, 1fr) 21px 35px; align-items: center; height: 27px; border-bottom: 1px solid #b7b8ba; color: #4c4e50; }
.step > svg { width: 8px; height: 7px; margin-left: 6px; }
.step.first { grid-template-columns: 20px 21px 81px 114px minmax(0, 1fr) 21px 35px; }
.step.first .cell:nth-last-of-type(2) { grid-column: 6; }
.step p, .step label { padding-left: 8px; white-space: nowrap; }
.node { position: relative; align-self: stretch; border: solid #b7b8ba; border-width: 0 1px; display: grid; place-items: center; background: linear-gradient(#444, #444) center / 1px 100% no-repeat; }
.node::after { content: ""; width: 11px; height: 11px; border: 1px solid #333; border-radius: 50%; background: #e7e7e8; }
.node.dot { background: linear-gradient(transparent 50%, #444 50%) center / 1px 100% no-repeat; }
.node.dot::after { width: 5px; height: 5px; background: #333; }
.last .node { background: linear-gradient(#444 50%, transparent 50%) center / 1px 100% no-repeat; }
.cell { align-self: stretch; display: flex; align-items: center; justify-content: center; border-left: 1px solid #b7b8ba; }
.cell svg { width: 11px; height: 10px; }
.cell i, .toolbar i, .edit i, .more i { border: 3px solid transparent; border-top-color: #111; border-bottom: 0; }
.cell i { border-width: 3px 2px 0; margin-top: 3px; }
.transport { margin-top: auto; display: flex; justify-content: center; align-items: center; gap: 9px; height: 36px; background: #d3d4d9; }
.transport button { width: 21px; height: 21px; border-radius: 50%; background: #ececec; display: grid; place-items: center; }
.transport .mid { background: #e2e2e3; border: 1px solid #c2bfba; color: #222; }
.transport svg { width: 10px; height: 10px; }
.btabs { display: flex; gap: 2px; height: 17px; background: #92979b; padding-bottom: 1px; }
.btabs button { width: 44px; background: #828789; line-height: 16px; border-radius: 0 0 2px 2px; }
.btabs .active { background: linear-gradient(#f2f2f3, #cfd0d2); }

.toolbar { display: flex; align-items: center; height: 24px; flex: none; background: linear-gradient(#e8eaec, #c5c8cc); color: #222; }
.toolbar .dots { width: 3px; height: 18px; margin: 0 1px; border-left: 2px dotted #96999c; }
.toolbar button { position: relative; flex: 0 1 22px; min-width: 0; height: 20px; display: flex; align-items: center; justify-content: center; gap: 1px; white-space: nowrap; }
.toolbar svg { width: 12px; height: 12px; }
.toolbar svg.sm { width: 10px; height: 10px; }
.toolbar svg.wide { width: 14px; height: 8px; }
.toolbar .dim { color: #7d8084; }
.toolbar .mid { color: #55585c; }
.toolbar .on { border: 1px solid #7f8388; border-radius: 2px; background: #bfc3ca; }
.toolbar .on svg { width: 10px; height: 10px; }
.toolbar .gap4 { margin-left: 4px; }
.toolbar .w30 { flex-basis: 29px; }
.toolbar sup { position: absolute; left: 3px; top: 1px; font-size: 4px; line-height: 5px; }

.viewers { flex: 1 1 384px; min-height: 0; display: grid; grid-template: minmax(0, 1fr) minmax(0, 1fr) / minmax(0, 1fr) minmax(0, 1fr); gap: 1px; background: #45474b; border: solid #45474b; border-width: 1px 0; }
.view { width: 100%; height: 100%; background: linear-gradient(#353848, #5d626b); }
.view.light { background: linear-gradient(#cfd0d0, #a9abaf 35%, #8d8f99 65%, #5f636c); }
.view.picked { outline: 1px solid #d7d7da; outline-offset: -1px; }
.view text { fill: #fff; font: 9px "Liberation Sans", sans-serif; text-anchor: middle; }
.view .start { text-anchor: start; }
.streaks { fill: none; stroke: #931f2d; stroke-width: 2; opacity: .16; }
.cracks { fill: none; stroke: #7a0812; stroke-width: 1; opacity: .5; }
.deep { stroke-width: 2; }
.void { fill: #750009; opacity: .9; }

.bottom { flex: 0 0 203px; display: grid; grid-template-columns: minmax(0, 300fr) minmax(0, 269fr); gap: 4px; margin-top: 4px; }
.props { position: relative; flex: 1; display: flex; flex-direction: column; padding: 4px 3px; background: #e2e4e8; overflow: hidden; }
.row { display: flex; align-items: center; height: 17px; gap: 2px; }
.row .lab { flex: none; width: 69px; font-weight: 700; white-space: nowrap; color: #333; }
.row label:not(.lab) { display: flex; align-items: center; gap: 4px; margin-right: 3px; white-space: nowrap; }
.row .sel-wrap { width: 97px; }
input[type=radio] { appearance: none; width: 9px; height: 9px; border: 1px solid #9a9da1; border-radius: 50%; background: radial-gradient(#fff, #d3d5d8); }
input[type=radio]:checked { background: radial-gradient(circle, #1e6d9f 2px, #e9eff4 3px); border-color: #567; }
.num { width: 47px; height: 13px; border: 0; background: #fbfbfc; padding: 0 3px; min-width: 0; line-height: 13px; }
.ital { font-style: italic; }
.ramp svg { width: 61px; height: 14px; margin-right: 4px; }
.btn { display: flex; align-items: center; justify-content: center; border: 1px solid #8b8e92; border-radius: 2px; background: linear-gradient(#f4f4f5, #d3d5d8); line-height: 11px; }
.edit { width: 22px; height: 13px; margin-left: 1px; }
.edit i, .more i { border-width: 3px 2px 0; margin-top: 4px; }
.arr { width: 15px; height: 13px; color: #55585b; }
.arr i { border: 3px solid transparent; }
.arr .lt { border-right: 6px solid; border-left: 0; } .arr .rt { border-left: 6px solid; border-right: 0; }
.val { width: 50px; }
.more { width: 16px; height: 13px; font-weight: 700; }
.slide { appearance: none; width: 78px; height: 10px; border: 1px solid #a7aaad; border-right-color: #eee; border-bottom: 0; background: linear-gradient(#777, #777) center 4px / 72px 1px no-repeat; }
.slide::-webkit-slider-thumb { appearance: none; width: 9px; height: 8px; margin-top: 6px; background: linear-gradient(#e8e9eb, #e8e9eb) center bottom / 3px 3px no-repeat, #7a7d80; clip-path: polygon(50% 0, 100% 100%, 0 100%); }
.corner { position: absolute; right: 0; top: 4px; display: flex; gap: 3px; }
.sq { width: 19px; height: 19px; font: bold 12px/16px "Open Sans", sans-serif; }
.cut { width: 16px; border-right: 0; border-radius: 2px 0 0 2px; }
.cut svg { width: 14px; height: 11px; }
.hscroll { flex: none; display: flex; align-items: center; height: 12px; padding: 0 4px; background: #ebebed; }
.hscroll i { border: 2px solid transparent; }
.hscroll .lt { border-right-color: #333; margin-right: 4px; } .hscroll .rt { border-left-color: #333; margin-left: auto; }
.thumb { height: 10px; border: 1px solid #a5a7aa; background: linear-gradient(#f1f1f2, #d0d2d4); text-align: center; font: 6px/8px "Liberation Sans", sans-serif; }
.t1 { width: 90%; } .t2 { width: 80%; } .t3 { width: 87%; }

.seg { background: #cfd0d4; overflow: hidden; }
.segbody { flex: 1; padding: 4px 0 0 7px; overflow: hidden; }
.srow { display: flex; align-items: center; height: 18px; gap: 5px; }
.srow label { flex: none; width: 39px; font-weight: 700; white-space: nowrap; }
.srow .sel-wrap { flex: 0 0 102px; }
.cmd { width: 48px; height: 14px; flex: none; }
.vmark { color: #777; }
.seg h3 { display: flex; align-items: center; height: 17px; gap: 4px; font-weight: 700; }
.seg h3::after { content: ""; flex: 1; height: 1px; background: #b3b4b8; }
.mats { height: 54px; margin-top: 2px; border: solid #adafb3; border-width: 1px 0 1px 1px; }
.mats table { width: 100%; border-collapse: collapse; table-layout: fixed; }
.mats th { height: 15px; padding: 0 3px; text-align: left; font-weight: 700; color: #55585c; background: #dadbde; border-right: 1px solid #bfc0c3; font-size: 7px; white-space: nowrap; }
.mats .mc { width: 25px; } .mats .mv { width: 31px; } .mats .ml { width: 15px; padding: 0 0 0 2px; border-right: 0; }
.mats td { height: 13px; padding: 0 2px; line-height: 12px; }
.mats td svg { width: 9px; height: 10px; margin-left: 3px; }
.mats .mid input { margin-left: 2px; }
.sw { display: block; width: 13px; height: 13px; margin-left: 5px; border: 1px solid #3d5d5e; }
.ext { background: #559f99; } .ins { background: #49eecd; }
.chosen { background: #c4dcf5; color: #4c5f72; }
.chosen svg { color: #222; }
input[type=checkbox] { appearance: none; width: 9px; height: 9px; border: 1px solid #8e9195; background: #f3f3f4; display: grid; place-items: center; }
input[type=checkbox]:checked::before { content: "✓"; font: bold 8px/7px "DejaVu Sans", sans-serif; color: #2b3350; }
.addrow { display: flex; justify-content: flex-end; gap: 6px; margin-top: 4px; }
.stub { width: 12px; border-right: 0; border-radius: 2px 0 0 2px; }
.addrow + h3 { margin-top: 3px; }
.tools { display: flex; gap: 5px; margin-top: 2px; }
.tools .btn { width: 20px; height: 20px; }
.tools svg { width: 13px; height: 12px; color: #333; }
.phead .cursor { position: absolute; right: 36px; top: 1px; width: 9px; height: 13px; z-index: 2; }

.tables { flex: 0 0 143px; }
.right { gap: 4px; }
.ttabs { flex: none; display: flex; height: 14px; background: #8c9195; overflow: hidden; }
.tt { display: flex; align-items: center; gap: 7px; min-width: 0; padding: 0 4px; background: #a5a9ac; border-right: 1px solid #6b7074; }
.tt button { flex: 1; min-width: 0; white-space: nowrap; line-height: 13px; text-align: right; padding-right: 5px; }
.tt svg { width: 6px; height: 6px; }
.t-a { flex: 0 1 79px; } .t-b { flex: 0 1 138px; } .t-c { flex: 0 1 135px; background: #c3c5c8; }
.t-a button { text-align: left; padding: 0; }
.tt.t-a { padding-left: 1px; }
.nav { flex: 1; border-radius: 0; }
.nav i { border: 3px solid transparent; } .nav .lt { border-right: 5px solid; border-left: 0; } .nav .rt { border-left: 5px solid; border-right: 0; }
.tbody { flex: 1; padding: 5px 7px 0; background: #e5e6e9; }
.tbody table { width: 100%; border-collapse: collapse; table-layout: fixed; border: 1px solid #9ea0a3; border-bottom-width: 2px; background: #bdbdbd; }
.tbody th { font-weight: 400; background: #f4f4f5; height: 20px; padding: 0; text-align: center; white-space: nowrap; }
.tbody thead th { height: 15px; border-right: 1px solid #dedfe0; }
.tbody .rn { width: 10px; } .tbody .ean { width: 86px; }
.tbody td { padding: 0 2px; border: 1px solid #a9aaab; }
.sheet { display: block; width: 77px; height: 14px; border: 1px solid #8f9194; border-top: 0; border-radius: 0 0 3px 3px; background: #c1c3c5; white-space: nowrap; }

.browser { flex: 0 0 152px; background: #a6abb0; }
.search { display: flex; align-items: center; gap: 4px; height: 15px; margin: 3px 3px; padding: 0 3px; border: 1px solid #75797d; border-radius: 8px; background: #ececee; }
.search svg { width: 9px; height: 9px; color: #333; }
.search input { flex: 1; min-width: 0; border: 0; background: none; outline: 0; }
.search input::placeholder { color: #707274; opacity: 1; }
.lists { flex: 1; min-height: 0; display: grid; grid-template-columns: minmax(0, 134fr) minmax(0, 134fr) minmax(0, 102fr); gap: 2px; margin: 0 0 2px 3px; }
.list, .info { border: 1px solid #55595d; background: #f1f1f2; overflow: hidden; }
.list li { display: flex; align-items: center; gap: 4px; height: 12px; padding-left: 3px; white-space: nowrap; }
.list svg { width: 10px; height: 9px; color: #64686b; }
.list .hot { background: #e6e6e7; }
.list .rule { height: 15px; border-bottom: 1px solid #bbb; padding-bottom: 3px; }
.rings li { gap: 5px; padding-left: 1px; }
.rings svg, .ihead svg { color: #cf3f5b; } .rings .pu { color: #a0568f; }
.info { border-right: 0; padding: 5px 0 0 3px; display: flex; flex-direction: column; line-height: 9px; }
.ihead { display: flex; align-items: center; gap: 5px; margin-bottom: 4px; }
.ihead svg { width: 12px; height: 11px; }
.info h3 { font: bold 9px/11px "Noto Sans", sans-serif; width: 60px; }
.type { margin-top: 12px; white-space: nowrap; }
.ibtns { display: flex; gap: 6px; margin-top: auto; flex: none; }
.ibtns .btn { width: 46px; height: 3px; border-bottom: 0; }

.tprops { flex: 1; background: #cfd0d4; }
.sub { height: 10px; flex: none; background: linear-gradient(90deg, transparent 144px, #aaa 144px, #aaa 145px, transparent 145px), #dcdde0; border-bottom: 1px solid #a9abae; }
.modrow { display: flex; align-items: center; flex: none; height: 24px; padding: 0 5px 0 10px; background: #d2d3d7; }
.ringbig { width: 13px; height: 12px; color: #cb5a68; }
.exp { border-left: 4px solid transparent; border-bottom: 4px solid #333; margin: 0 10px 0 7px; }
.mod { width: 110px; height: 14px; padding: 0 3px; background: #ee6672; border: 1px solid #dc5966; border-radius: 2px; text-align: left; white-space: nowrap; }
.grid4 { width: 12px; height: 12px; margin-left: 23px; margin-right: auto; }
.prow { display: flex; align-items: center; flex: none; height: 16px; background: #e6e7ea; border-left: 2px solid #7aa0d8; }
.prow.alt { height: 17px; background: #dfe0e3; }
.prow label { flex: none; width: 142px; padding-left: 44px; font-weight: 700; }
.prow .sel-wrap { width: 97px; }
.prow .num { width: 52px; }
.range { width: 86px; height: 14px; margin: 0 6px 0 1px; }
.prow .more { margin-left: 2px; }
.blank { flex: 1; }
.apply { display: flex; align-items: center; justify-content: space-between; height: 28px; padding: 0 10px; background: linear-gradient(#c6c8cb, #9da0a4); border-top: 1px solid #9b9ea1; }
.apply label { display: flex; align-items: center; gap: 3px; }
.go { width: 56px; height: 16px; border: 1px solid #357a3a; border-radius: 2px; background: linear-gradient(#8fe28d, #46c04a); line-height: 13px; }

.status { flex: none; display: flex; align-items: center; gap: 5px; height: 19px; padding: 0 2px 2px 7px; background: #828a8c; border-top: 2px solid #70777a; }
.status > span:first-child { flex: 1; }
.stop { width: 54px; height: 13px; border: 1px solid #74797c; border-radius: 2px; background: #949a9d; color: #596064; }
.mem { width: 58px; font-size: 5px; line-height: 6px; }
.mem span { white-space: nowrap; }
.meter { height: 4px; margin-top: 1px; border: 1px solid #666; background: #a1a6a8; }
.meter i { display: block; width: 18%; height: 100%; background: #f09a2e; }
.pct { width: 14px; font-size: 7px; }
.chev { width: 13px; height: 13px; border: 1px solid #7795b0; background: #d7dee5; display: grid; place-items: center; }
.chev svg { width: 9px; height: 9px; }
```
